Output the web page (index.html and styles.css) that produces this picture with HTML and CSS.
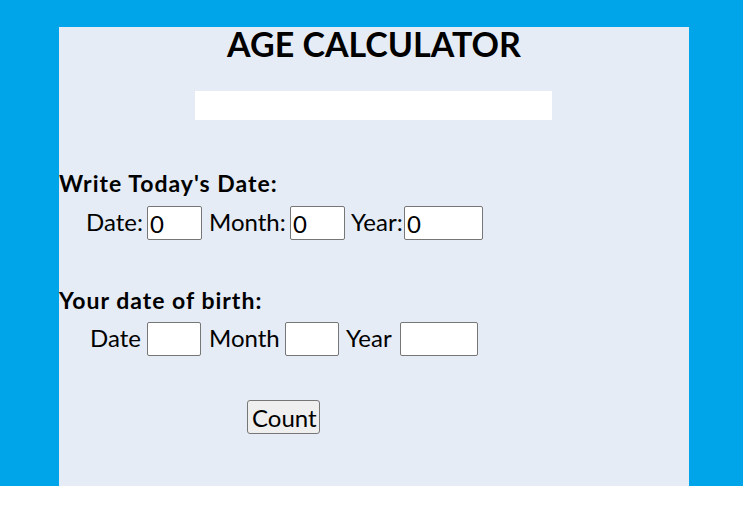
FILE: index.html
```html
<!DOCTYPE html>
<html>
<head>
<meta charset="utf-8">
<title>Age Calculator</title>
<link rel="stylesheet" href="styles.css">
</head>
<body>
<div class="page">
  <div class="card">
    <h1 class="title">AGE CALCULATOR</h1>
    <input class="result" type="text" readonly>
    <h3 class="section-title first">Write Today's Date:</h3>
    <div class="row row-today">
      <label class="lbl l1">Date:</label>
      <input class="field small" type="text" value="0">
      <label class="lbl l2">Month:</label>
      <input class="field small" type="text" value="0">
      <label class="lbl l3">Year:</label>
      <input class="field big" type="text" value="0">
    </div>
    <h3 class="section-title second">Your date of birth:</h3>
    <div class="row row-birth">
      <label class="lbl b1">Date</label>
      <input class="field small" type="text">
      <label class="lbl b2">Month</label>
      <input class="field small" type="text">
      <label class="lbl b3">Year</label>
      <input class="field big" type="text">
    </div>
    <button class="count" type="button">Count</button>
  </div>
</div>
</body>
</html>
```
FILE: styles.css
```css
html {
  background: #ffffff;
}
body {
  margin: 0;
  font-family: Lato, "Open Sans", sans-serif;
  color: #000;
}
.page {
  background: #00a4e8;
  height: 486px;
  padding-top: 27px;
  box-sizing: border-box;
}
.card {
  margin-left: 59px;
  width: 630px;
  height: 459px;
  background: #e5ecf6;
  display: flex;
  flex-direction: column;
}
.title {
  margin: 0;
  font-size: 34px;
  line-height: 34px;
  font-weight: 700;
  text-align: center;
}
.result {
  display: block;
  margin: 30px 0 0 136px;
  width: 357px;
  height: 29px;
  border: none;
  padding: 0;
  background: #fff;
  outline: none;
}
.section-title {
  margin: 0;
  font-size: 23px;
  line-height: 26px;
  font-weight: 700;
  letter-spacing: 1px;
}
.section-title.first { margin-top: 50px; }
.section-title.second { margin-top: 47px; }
.row {
  display: flex;
  align-items: center;
  height: 34px;
  font-size: 24px;
}
.row-today { margin-top: 10px; margin-left: 27px; }
.row-birth { margin-top: 9px; margin-left: 31px; }
.lbl {
  display: block;
  white-space: nowrap;
  line-height: 26px;
  margin-bottom: 2px;
}
.l1 { width: 61px; }
.l2 { width: 81px; margin-left: 7px; }
.l3 { width: 53px; margin-left: 6px; }
.b1 { width: 57px; }
.b2 { width: 76px; margin-left: 8px; }
.b3 { width: 54px; margin-left: 7px; }
.field {
  box-sizing: border-box;
  height: 34px;
  border: 1px solid #767676;
  border-radius: 2px;
  background: #fff;
  padding: 1px 2px;
  font: inherit;
  font-size: 24px;
  color: #000;
  margin: 0;
}
.row-today .small { width: 55px; }
.row-today .big { width: 79px; }
.row-birth .small { width: 54px; }
.row-birth .big { width: 78px; }
.count {
  align-self: flex-start;
  margin: 44px 0 0 188px;
  box-sizing: border-box;
  width: 73px;
  height: 34px;
  padding: 0 4px;
  font-family: inherit;
  font-size: 24px;
  background: #efefef;
  border: 1px solid #767676;
  border-radius: 3px;
  color: #000;
}
```
